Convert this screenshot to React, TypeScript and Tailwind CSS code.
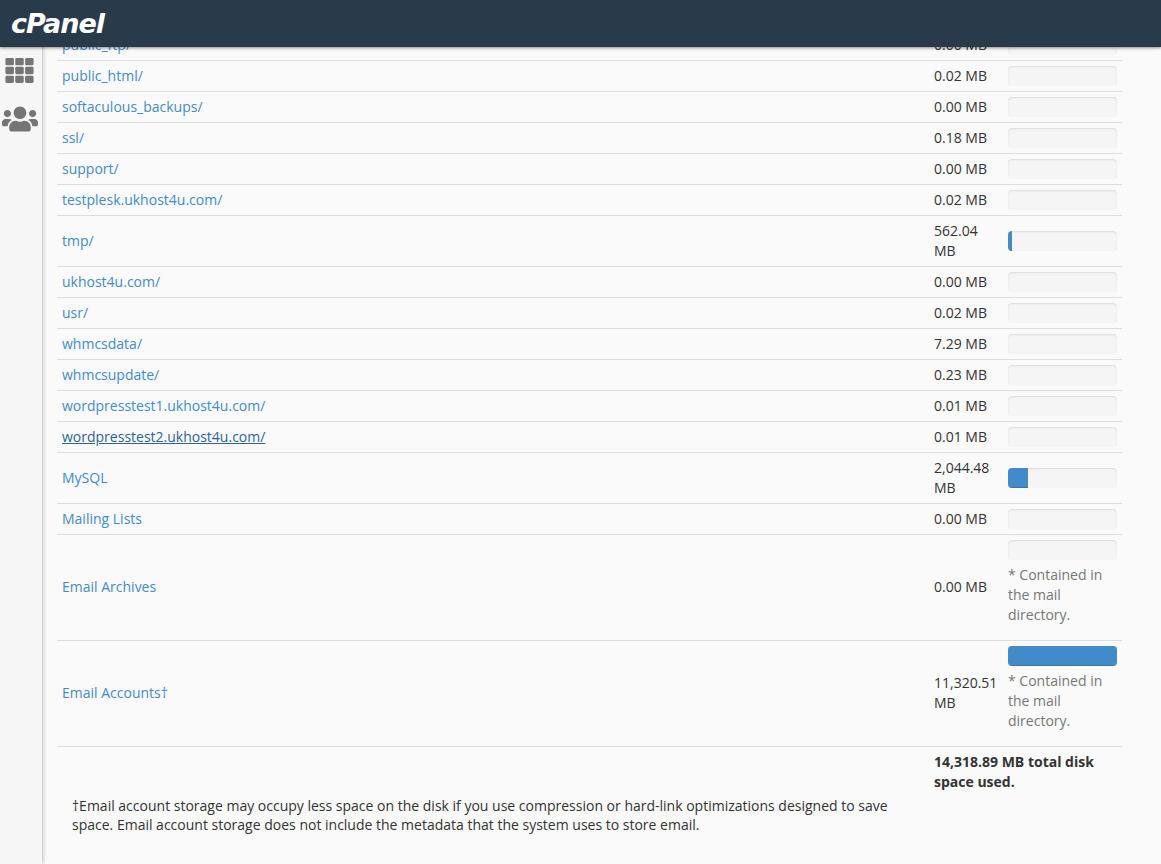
import { FaUsers } from 'react-icons/fa';

type Row = {
  name: string;
  size: string;
  pct?: number;
  note?: boolean;
  hover?: boolean;
};

const rows: Row[] = [
  { name: 'public_ftp/', size: '0.00 MB' },
  { name: 'public_html/', size: '0.02 MB' },
  { name: 'softaculous_backups/', size: '0.00 MB' },
  { name: 'ssl/', size: '0.18 MB' },
  { name: 'support/', size: '0.00 MB' },
  { name: 'testplesk.ukhost4u.com/', size: '0.02 MB' },
  { name: 'tmp/', size: '562.04 MB', pct: 4 },
  { name: 'ukhost4u.com/', size: '0.00 MB' },
  { name: 'usr/', size: '0.02 MB' },
  { name: 'whmcsdata/', size: '7.29 MB' },
  { name: 'whmcsupdate/', size: '0.23 MB' },
  { name: 'wordpresstest1.ukhost4u.com/', size: '0.01 MB' },
  { name: 'wordpresstest2.ukhost4u.com/', size: '0.01 MB', hover: true },
  { name: 'MySQL', size: '2,044.48 MB', pct: 18 },
  { name: 'Mailing Lists', size: '0.00 MB' },
  { name: 'Email Archives', size: '0.00 MB', note: true },
  { name: 'Email Accounts†', size: '11,320.51 MB', pct: 100, note: true },
];

function GridIcon() {
  const cells = [];
  for (let y = 0; y < 3; y++) {
    for (let x = 0; x < 3; x++) {
      cells.push(<rect key={`${x}-${y}`} x={x * 10} y={y * 9} width="8.6" height="7.4" rx="1.4" />);
    }
  }
  return (
    <svg width="29" height="25" viewBox="0 0 28.6 25.4" fill="#757575">
      {cells}
    </svg>
  );
}

function SizeRow({ row }: { row: Row }) {
  const pad = row.note ? 'px-[5px] pt-[5px] pb-[7px] align-middle' : 'px-[5px] py-[5px] align-middle';
  return (
    <tr className="border-t border-[#ddd]">
      <td className={pad}>
        <a className={row.hover ? 'text-[#2a6496] underline' : 'text-[#428bca]'}>{row.name}</a>
      </td>
      <td className={pad}>{row.size}</td>
      <td className="px-[5px] py-[5px] align-middle">
        <div className="h-5 overflow-hidden rounded bg-[#f5f5f5] shadow-[inset_0_1px_2px_rgba(0,0,0,0.1)]">
          {row.pct ? (
            <div
              className="h-full bg-[#428bca] shadow-[inset_0_-1px_0_rgba(0,0,0,0.15)]"
              style={{ width: `${row.pct}%` }}
            />
          ) : null}
        </div>
        {row.note ? <div className="mt-[5px] mb-[10px] text-[#777]">* Contained in the mail directory.</div> : null}
      </td>
    </tr>
  );
}

export default function App() {
  return (
    <div className="relative flex h-[864px] overflow-hidden bg-[#fafafa] font-['Open_Sans',sans-serif] text-sm leading-5 text-[#333]">
      {/* top bar lies over the scrolled page */}
      <header className="absolute inset-x-0 top-0 z-20 flex h-[47px] items-center bg-[#293a4a] pl-[11px] shadow-[0_1px_3px_rgba(0,0,0,0.45)]">
        <span className="font-['DejaVu_Sans',sans-serif] text-[27px] leading-none font-bold tracking-[-1px] text-white italic">
          cPanel
        </span>
      </header>

      <aside className="z-10 flex w-[42px] shrink-0 flex-col items-center bg-[#f6f6f6] pt-[58px] pr-[3px] shadow-[1px_0_4px_rgba(0,0,0,0.25)]">
        <GridIcon />
        <FaUsers className="mt-[17.5px] text-[36px] text-[#757575]" />
      </aside>

      <main className="flex-1 pt-[29px] pl-[15px]">
        <table className="w-[1065px] table-fixed border-collapse">
          <colgroup>
            <col className="w-[872px]" />
            <col className="w-[74px]" />
            <col className="w-[119px]" />
          </colgroup>
          <tbody>
            {rows.map((row) => (
              <SizeRow key={row.name} row={row} />
            ))}
            <tr className="border-t border-[#ddd]">
              <td />
              <td colSpan={2} className="px-[5px] pt-[5px] pb-[4px] font-bold">
                14,318.89 MB total disk space used.
              </td>
            </tr>
            <tr>
              <td className="p-0 px-[5px]">
                <p className="px-[10px] leading-[19px]">
                  †Email account storage may occupy less space on the disk if you use compression or hard-link
                  optimizations designed to save space. Email account storage does not include the metadata that
                  the system uses to store email.
                </p>
              </td>
              <td colSpan={2} />
            </tr>
          </tbody>
        </table>
      </main>
    </div>
  );
}
